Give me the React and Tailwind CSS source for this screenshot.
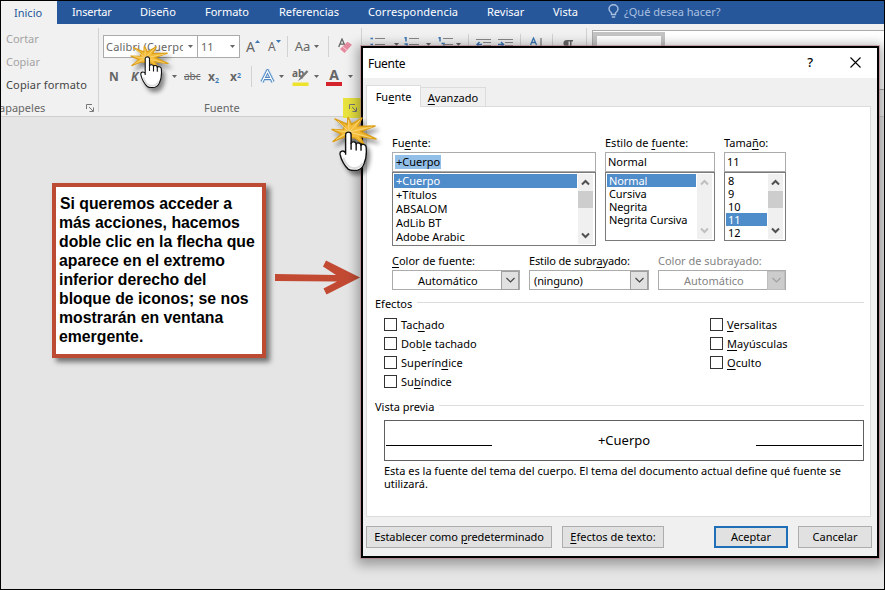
import React from 'react';

const tabs = [
	{ label: 'Insertar', width: 'w-[68px]', text: 'tracking-[-0.2px]' },
	{ label: 'Diseño', width: 'w-[65px]' },
	{ label: 'Formato', width: 'w-[74px]' },
	{ label: 'Referencias', width: 'w-[89px]' },
	{ label: 'Correspondencia', width: 'w-[119px]', text: 'tracking-[0.13px]' },
	{ label: 'Revisar', width: 'w-[66px]' },
	{ label: 'Vista', width: 'w-[54px]' },
];

const fonts = ['+Cuerpo', '+Títulos', 'ABSALOM', 'AdLib BT', 'Adobe Arabic'];
const styles = ['Normal', 'Cursiva', 'Negrita', 'Negrita Cursiva'];
const sizes = ['8', '9', '10', '11', '12'];

// Underlines the access key, e.g. "Fu_ente" underlines the first "e"
const Label = ({ children, className = '' }) => {
	const [before, after] = children.split('_');
	if (after === undefined) return <span className={className}>{children}</span>;
	return (
		<span className={className}>
			{before}
			<span className="underline underline-offset-2">{after[0]}</span>
			{after.slice(1)}
		</span>
	);
};

const Caret = () => (
	<svg width="5" height="3" viewBox="0 0 5 3" className="shrink-0">
		<path d="M0 0h5L2.500 3z" fill="#666" />
	</svg>
);

const Launcher = () => (
	<svg width="8" height="8" viewBox="0 0 8 8" fill="none" stroke="#777">
		<path d="M0.500 5V0.500H6M3 3l4 4M7.500 3.500v4h-4" />
	</svg>
);

const Separator = ({ className }) => <div className={`w-px bg-[#d2d2d2] ${className}`} />;

const TopTabs = () => (
	<div className="flex h-6 items-center bg-[#27579b] pb-px text-white">
		<div className="-mb-px flex h-6 w-[57px] items-center bg-[#f1f1f1] pl-[14px] text-[#27579b]">Inicio</div>
		<div className="w-[15px]" />
		{tabs.map((tab) => (
			<div key={tab.label} className={`shrink-0 ${tab.width} ${tab.text ?? ''}`}>
				{tab.label}
			</div>
		))}
		<svg width="11" height="15" viewBox="0 0 11 15" fill="none" stroke="#a9c0e0" strokeWidth="1.400" className="ml-[1px]">
			<path d="M3.500 10.500V9C2 8 1 6.800 1 5a4.500 4.300 0 0 1 9 0c0 1.800-1 3-2.500 4v1.500zM3.800 13h3.400" />
		</svg>
		<span className="ml-[5px] text-[#a9c0e0]">¿Qué desea hacer?</span>
	</div>
);

const Clipboard = () => (
	<div className="w-[98px] shrink-0 text-[#a3a3a3]">
		<div className="flex h-[23px] items-center pl-[6px] pt-[6px]">Cortar</div>
		<div className="flex h-[23px] items-center pl-[6px] pt-[6px]">Copiar</div>
		<div className="flex h-[23px] items-center pl-[6px] pt-[6px] tracking-[0.15px] text-[#444]">Copiar formato</div>
		<div className="flex items-center justify-between pr-[4px] pt-[7px] text-[#666]">
			<span className="-ml-px">apapeles</span>
			<Launcher />
		</div>
	</div>
);

const FontGroup = () => (
	<div className="w-[262px] shrink-0 pl-[4px] text-[#666]">
		<div className="mt-[10px] flex h-[23px] items-center pt-px">
			<div className="flex h-[23px] w-[95px] items-center border border-[#ababab] bg-white pl-[2px] pr-[4px]">
				<span className="w-[77px] overflow-hidden whitespace-nowrap tracking-[0.2px]">Calibri (Cuerpo</span>
				<span className="ml-auto"><Caret /></span>
			</div>
			<div className="-ml-px flex h-[23px] w-[43px] items-center justify-between border border-[#ababab] bg-white pl-[3px] pr-[4px]">
				11 <Caret />
			</div>
			<div className="ml-[6px] flex items-center text-[14px]">
				A
				<svg width="5" height="3" className="-mt-[10px]"><path d="M0 3h5L2.500 0z" fill="#3b78b5" /></svg>
			</div>
			<div className="ml-[8px] flex items-center text-[12px]">
				A
				<svg width="5" height="3" className="-mt-[10px]"><path d="M0 0h5L2.500 3z" fill="#3b78b5" /></svg>
			</div>
			<Separator className="ml-[6px] h-[21px]" />
			<span className="ml-[7px] mr-[4px] text-[13px]">Aa</span>
			<Caret />
			<Separator className="ml-[9px] h-[21px]" />
			<svg width="15" height="16" viewBox="0 0 15 16" className="ml-[9px]">
				<path d="M0.700 9L4 1l3.300 7.500M2 6.200h4" fill="none" stroke="#666" strokeWidth="1.300" />
				<path d="M2 11L9.500 3.800l4.500 3L6.500 15z" fill="#e58a9f" />
				<path d="M4.500 8.600l4.600 3.700" stroke="#f6d3da" />
			</svg>
		</div>
		<div className="mt-[8px] flex h-[23px] items-center font-bold">
			<span className="ml-[6px] w-[22px] text-[12px]">N</span>
			<span className="w-[41px] text-[12px] italic">K</span>
			<Caret />
			<span className="ml-[7px] w-[24px] text-[10px] font-normal line-through">abc</span>
			<span className="w-[22px] text-[12px]">x<sub className="text-[7px] text-[#3b78b5]">2</sub></span>
			<span className="w-[21px] text-[12px]">x<sup className="text-[7px] text-[#3b78b5]">2</sup></span>
			<Separator className="h-[21px]" />
			<svg width="15" height="15" viewBox="0 0 15 15" fill="none" className="ml-[8px]">
				<path d="M2 13L7.500 2 13 13M4.500 9.500h6" stroke="#b9d4ee" strokeWidth="4.500" />
				<path d="M2 13L7.500 2 13 13M4.500 9.500h6" stroke="#4f86c0" strokeWidth="2.800" />
				<path d="M2 13L7.500 2 13 13M4.500 9.500h6" stroke="#fff" strokeWidth="1.200" />
			</svg>
			<span className="ml-[4px]"><Caret /></span>
			<div className="relative ml-[8px] h-[18px] w-[17px] text-[10px] leading-[11px]">
				ab
				<svg width="17" height="18" viewBox="0 0 17 18" className="absolute inset-0">
					<path d="M15.500 3L9 10" stroke="#777" strokeWidth="2.400" />
					<path d="M9 8l2 2-5 3z" fill="#777" />
					<path d="M0.500 14.500h16v3.500h-16z" fill="#eee32c" />
				</svg>
			</div>
			<span className="ml-[5px]"><Caret /></span>
			<div className="ml-[7px] flex h-[18px] w-[16px] items-center justify-center border-b-4 border-[#d5232b] text-[14px]">A</div>
			<span className="ml-[6px]"><Caret /></span>
		</div>
		<div className="flex items-center pt-[12px] text-[#666]">
			<span className="ml-[101px]">Fuente</span>
			<div className="-mb-[4px] -mt-[4px] ml-auto flex h-[20px] w-[18px] items-center justify-center bg-[#e9e33f] pl-[2px]">
				<Launcher />
			</div>
		</div>
	</div>
);

const ListIcon = ({ marks, arrow }) => (
	<svg width="15" height="11" viewBox="0 0 15 11" fill="none">
		<path d={marks} stroke="#3b78b5" strokeWidth="1.500" />
		<path d={arrow ? 'M0 0.500h15M7 3.500h8M7 6.500h8' : 'M5 1.500h10M5 7.500h10'} stroke="#888" />
	</svg>
);

// Only the top of this group shows above the dialog
const ParagraphGroup = () => (
	<div className="flex h-[23px] w-[224px] shrink-0 items-start pl-[8px] pt-[13px]">
		<ListIcon marks="M0.500 1.500h2.500M0.500 7.500h2.500" />
		<span className="ml-[9px] mt-[6px]"><Caret /></span>
		<span className="ml-[5px]"><ListIcon marks="M0.500 1l1.500-.5v4M0.500 7h2.500v3" /></span>
		<span className="ml-[7px] mt-[6px]"><Caret /></span>
		<span className="ml-[7px]"><ListIcon marks="M0.500 1l1.500-.5v4M3.500 6.500h2.500v3" /></span>
		<span className="ml-[3px] mt-[6px]"><Caret /></span>
		<Separator className="-mt-[3px] ml-[7px] h-[18px]" />
		<span className="ml-[7px] mt-[2px]"><ListIcon arrow marks="M6 5.500H1M3.500 3L1 5.500 3.500 8" /></span>
		<span className="ml-[7px] mt-[2px]"><ListIcon arrow marks="M0 5.500h5M3 3l2.500 2.500L3 8" /></span>
		<Separator className="-mt-[3px] ml-[7px] h-[18px]" />
		<svg width="13" height="15" viewBox="0 0 13 15" fill="none" className="ml-[9px]">
			<path d="M0.500 8L3.500 1l3 7M1.500 5.500h4" stroke="#3b78b5" strokeWidth="1.300" />
			<path d="M11 1v14" stroke="#777" strokeWidth="1.200" />
		</svg>
		<Separator className="-mt-[3px] ml-[9px] h-[18px]" />
		<svg width="10" height="12" viewBox="0 0 10 12" className="ml-[10px] mt-[3px]">
			<path d="M10 0H4a3.500 3.200 0 0 0 0 6.500V12h1.500V1.500H7V12h1.500V1.500H10z" fill="#666" />
		</svg>
	</div>
);

const Ribbon = () => (
	<div className="flex h-[93px] border-b border-[#cfcfcf] bg-[#f1f1f1]">
		<Clipboard />
		<Separator className="mt-[4px] h-[84px]" />
		<FontGroup />
		<Separator className="mt-[4px] h-[84px]" />
		<ParagraphGroup />
		<Separator className="mt-[4px] h-[84px]" />
		<div className="ml-[5px] mt-[6px] h-[60px] grow border border-r-0 border-[#ababab] bg-white">
			<div className="mt-px h-[50px] w-[72px] border-4 border-[#c4c4c4]" />
		</div>
	</div>
);

const Chevron = ({ up, color = '#505050' }) => (
	<svg width="9" height="7" viewBox="0 0 9 7" fill="none" stroke={color} strokeWidth="2">
		<path d={up ? 'M1 5.500l3.500-3.500L8 5.500' : 'M1 1.500l3.500 3.500L8 1.500'} />
	</svg>
);

const ScrollBar = ({ disabled }) => (
	<div className="mr-px flex w-[15px] shrink-0 flex-col items-center justify-between bg-[#f0f0f0] pb-[5px] pt-[5px]">
		<div className="flex w-full flex-col items-center gap-[5px]">
			<Chevron up color={disabled ? '#bfbfbf' : '#505050'} />
			{!disabled && <div className="h-[17px] w-full bg-[#cdcdcd]" />}
		</div>
		<Chevron color={disabled ? '#bfbfbf' : '#505050'} />
	</div>
);

const ListBox = ({ label, value, items, selected, width, height, row, highlight, disabled }) => (
	<div className={`flex flex-col ${width}`}>
		<Label className="h-[16px] leading-[16px]">{label}</Label>
		<div className="mt-px flex h-[20px] items-center border border-[#ababab] pl-[2px]">
			<span className={highlight ? 'bg-[#92bfe8] px-px leading-[14px]' : 'leading-[14px]'}>{value}</span>
		</div>
		<div className={`flex justify-between border border-[#7a7a7a] p-px ${height}`}>
			<div className="mr-px grow">
				{items.map((item) => (
					<div
						key={item}
						className={`whitespace-nowrap pl-[2px] ${row} ${item === selected ? 'bg-[#4f8cca] text-white' : ''}`}
					>
						{item}
					</div>
				))}
			</div>
			<ScrollBar disabled={disabled} />
		</div>
	</div>
);

const Select = ({ label, value, width, padding, disabled }) => (
	<div className={`${width} ${disabled ? 'text-[#838383]' : ''}`}>
		<Label className="block h-[16px] whitespace-nowrap leading-[16px]">{label}</Label>
		<div className={`mt-px flex h-[20px] items-center justify-between border border-[#ababab] ${padding}`}>
			{value}
			<div className={`flex h-[19px] w-[18px] items-center justify-center border ${disabled ? 'border-[#bfbfbf] bg-[#cccccc]' : 'border-[#a0a0a0] bg-[#e1e1e1]'}`}>
				<svg width="9" height="6" viewBox="0 0 9 6" fill="none" stroke={disabled ? '#a0a0a0' : '#444'} strokeWidth="1.200">
					<path d="M0.500 1l4 4 4-4" />
				</svg>
			</div>
		</div>
	</div>
);

const Check = ({ children }) => (
	<div className="flex h-[19px] items-center">
		<div className="h-[13px] w-[13px] border border-[#333]" />
		<Label className="ml-[4px] tracking-[0.05px]">{children}</Label>
	</div>
);

const Legend = ({ children }) => (
	<div className="flex h-[16px] items-center gap-[5px] pl-[8px] pr-[6px]">
		{children}
		<div className="-mt-px h-px grow bg-[#dcdcdc]" />
	</div>
);

const DialogButton = ({ children, className }) => (
	<button className={`flex h-[22px] items-center justify-center whitespace-nowrap bg-[#e1e1e1] pb-px ${className}`}>
		<Label>{children}</Label>
	</button>
);

const FontDialog = () => (
	<div className="absolute left-[361px] top-[46px] flex h-[512px] w-[518px] flex-col border-2 border-black bg-[#f0f0f0] text-black shadow-[0_3px_11px_4px_rgba(0,0,0,0.32)] outline-1 outline-[#b5707c]/50">
		<div className="flex h-[30px] shrink-0 items-center bg-white pl-[5px] pr-[16px]">
			<span className="grow text-[12px] tracking-[-0.3px]">Fuente</span>
			<span className="mb-px mr-[37px] text-[13px] font-medium">?</span>
			<svg width="11" height="11" viewBox="0 0 11 11" stroke="#000" strokeWidth="1.100" className="-mt-px">
				<path d="M0.500 0.500l10 10M10.500 0.500l-10 10" />
			</svg>
		</div>
		<div className="flex h-[28px] shrink-0 items-end pl-[3px]">
			<div className="z-10 -mb-px flex h-[22px] w-[55px] items-center justify-center border border-b-0 border-[#dcdcdc] bg-white">
				<Label>Fu_ente</Label>
			</div>
			<div className="-ml-px flex h-[19px] w-[66px] items-center justify-center border border-b-0 border-[#dcdcdc] pt-px">
				<Label>_Avanzado</Label>
			</div>
		</div>
		<div className="mx-[3px] flex h-[411px] w-[505px] shrink-0 flex-col border border-[#dcdcdc] bg-white">
			<div className="mt-[28px] flex h-[110px] items-start pl-[25px]">
				<ListBox label="Fu_ente:" value="+Cuerpo" items={fonts} selected="+Cuerpo" width="w-[204px]" height="h-[74px]" row="h-[14px] leading-[14px]" highlight />
				<div className="w-[9px]" />
				<ListBox label="Estilo de _fuente:" value="Normal" items={styles} selected="Normal" width="w-[110px]" height="h-[69px]" row="h-[13px] leading-[13px] tracking-[-0.1px]" disabled />
				<div className="w-[9px]" />
				<ListBox label="Tama_ño:" value="11" items={sizes} selected="11" width="w-[62px]" height="h-[69px]" row="h-[13px] leading-[13px]" />
			</div>
			<div className="mt-[8px] flex gap-[9px] pl-[25px]">
				<Select label="_Color de fuente:" value="Automático" width="w-[128px]" padding="pl-[25px]" />
				<Select label="Estilo de subr_ayado:" value="(ninguno)" width="w-[120px] tracking-[-0.15px]" padding="pl-[4px]" />
				<Select label="Color de subrayado:" value="Automático" width="w-[128px]" padding="pl-[25px]" disabled />
			</div>
			<div className="mt-[5px]">
				<Legend>Efectos</Legend>
			</div>
			<div className="mt-[4px] flex pl-[17px]">
				<div className="w-[326px]">
					<Check>Tac_hado</Check>
					<Check>Dob_le tachado</Check>
					<Check>Superín_dice</Check>
					<Check>Su_bíndice</Check>
				</div>
				<div>
					<Check>_Versalitas</Check>
					<Check>_Mayúsculas</Check>
					<Check>_Oculto</Check>
				</div>
			</div>
			<div className="mt-[7px]">
				<Legend>Vista previa</Legend>
			</div>
			<div className="ml-[17px] mt-[6px] flex h-[41px] w-[480px] items-center justify-between border border-[#606060] px-px text-[13px]">
				<div className="mt-[9px] h-px w-[106px] bg-black" />
				+Cuerpo
				<div className="mt-[9px] h-px w-[106px] bg-black" />
			</div>
			<p className="ml-[17px] mt-[3px] w-[475px] leading-[13px] tracking-[-0.02px]">
				Esta es la fuente del tema del cuerpo. El tema del documento actual define qué fuente se utilizará.
			</p>
		</div>
		<div className="mt-[9px] flex pl-[3px]">
			<DialogButton className="w-[186px] border border-[#adadad] tracking-[-0.1px]">Establecer como _predeterminado</DialogButton>
			<DialogButton className="ml-[10px] w-[102px] border border-[#adadad]">_Efectos de texto:</DialogButton>
			<DialogButton className="ml-[50px] w-[74px] border-2 border-[#1f6fb8]">Aceptar</DialogButton>
			<DialogButton className="ml-[10px] w-[74px] border border-[#adadad]">Cancelar</DialogButton>
		</div>
	</div>
);

const Callout = () => (
	<div className="flex items-center pl-[52px] pt-[66px]">
		<div className="h-[175px] w-[214px] whitespace-nowrap border-4 border-[#bd4b33] bg-white pl-[3px] pt-[7px] font-['Liberation_Sans',sans-serif] text-[15.800px] font-bold leading-[19px] text-black shadow-[4px_4px_5px_rgba(0,0,0,0.5)]">
			<span className="ml-px">Si queremos acceder a</span><br />
			más acciones, hacemos<br />
			doble clic en la flecha que<br />
			aparece en el extremo<br />
			inferior derecho del<br />
			bloque de iconos; se nos<br />
			mostrarán en ventana<br />
			emergente.
		</div>
		<svg width="87" height="36" viewBox="0 0 87 36" className="ml-[8px] mt-[14px]">
			<path d="M1 14l61 1L49 6.500 52 .5 86 17.500 52.500 34.500 49.500 28.500 63 21.500 1 21z" fill="#c24a33" />
		</svg>
	</div>
);

// Pointing hand with a click burst behind the fingertip
const ClickHand = ({ className, burst, hand }) => (
	<div className={`absolute drop-shadow-[3px_4px_2px_rgba(0,0,0,0.45)] ${className}`}>
		<svg viewBox="0 0 46 30" preserveAspectRatio="none" className={`absolute ${burst}`} strokeLinejoin="round">
			<path
				d="M13.500 9.500L4 2l12.500 5.500L17 0l3.500 7.500L31 1l-4.500 8.500L44 9l-14.500 5.500L45 22l-16-2.500 4 8-9-6.500-11-1L2 24.500l8.500-7.500L1 12.500l11 .5z"
				fill="#f3bd3a"
				stroke="#dda01a"
				strokeWidth="1.500"
			/>
			<path d="M18 15L7 4M18 15l-.5-12M18 15L29 3M18 15l23-5M18 15l23 6M18 15L5 22.500M18 15L4 13" stroke="#fbe29a" strokeWidth="0.700" />
		</svg>
		<svg viewBox="0 0 22 32" preserveAspectRatio="none" className={`absolute ${hand}`} fill="#fff" stroke="#111" strokeWidth="1.100" strokeLinejoin="round">
			<path d="M5.200 19V2.800C5.200.2 9.500.2 9.500 2.800V10c.3-1.800 3.900-1.800 4 .5.4-1.500 3.700-1.300 3.800.9.500-1.300 3.700-1 4 1.200.5 5 .2 9.500-1.600 13.500-1 2.800-2.500 4.600-5 5.200-2.500.4-6 .2-7.400-.8C5 28.500 1.500 23 .8 18.500.500 16 3.500 15 5.200 17.500" />
			<path d="M9.500 9.500v5.500M13.500 10.300v5.200M17.300 11v4.800" fill="none" />
			<path d="M3.500 21.500c1.500 4.500 3.500 7.500 7 8 4 .5 6.500-.5 8-4" fill="none" stroke="#ddd" strokeWidth="1.600" />
		</svg>
	</div>
);

export default function App() {
	return (
		<div className="relative h-[590px] w-[885px] overflow-hidden bg-[#e5e5e5] font-['Noto_Sans','Open_Sans',sans-serif] text-[11px] leading-[15px]">
			<TopTabs />
			<Ribbon />
			<Callout />
			<FontDialog />
			<ClickHand className="left-[130px] top-[46px]" burst="left-0 top-0 w-[39px] h-[24px]" hand="left-[10px] top-[10px] w-[22px] h-[32px]" />
			<ClickHand className="left-[331px] top-[117px]" burst="left-0 top-0 w-[46px] h-[30px]" hand="left-[8px] top-[14px] w-[28px] h-[40px]" />
			<div className="pointer-events-none absolute inset-0 border border-black" />
		</div>
	);
}
